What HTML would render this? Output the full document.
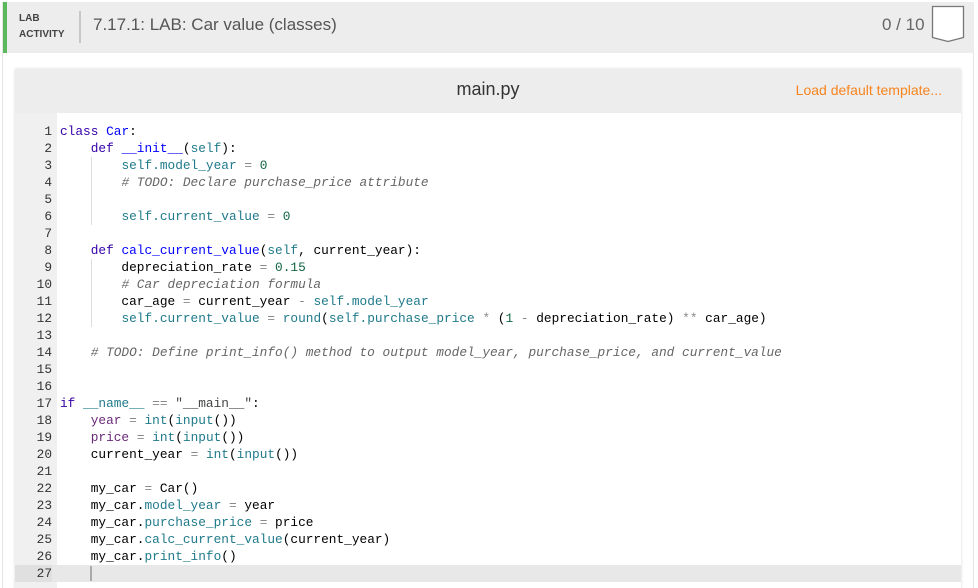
<!DOCTYPE html>
<html><head><style>
html,body{margin:0;width:978px;height:588px;overflow:hidden}
body{background:#fff;font-family:"Liberation Sans",sans-serif;position:relative}
.outer{position:absolute;left:2px;top:2px;width:970px;height:590px;border:1px solid #e4e4e4;border-top:none}
.hdr{position:absolute;left:3px;top:2px;width:971px;height:51px;background:#ededed}
.gb{position:absolute;left:3px;top:2px;width:4px;height:51px;background:#5cb85c}
.lab{position:absolute;left:19px;top:11px;font-size:10px;font-weight:bold;color:#444;line-height:16px}
.sep{position:absolute;left:79px;top:11px;width:2px;height:32px;background:#c8c8c8}
.title{position:absolute;left:93px;top:15px;font-size:17px;color:#555}
.score{position:absolute;left:882px;top:15px;font-size:17px;color:#666}
.card{position:absolute;left:15px;top:69px;width:946px;height:530px;background:#fff;box-shadow:0 0 3px rgba(0,0,0,.15)}
.ch{position:absolute;left:0;top:0;width:946px;height:44px;background:#ededed}
.fn{position:absolute;left:0;width:946px;top:10px;text-align:center;font-size:18px;color:#333}
.ld{position:absolute;right:19px;top:13px;font-size:14px;color:#f7841e}
.gut{position:absolute;left:0;top:44px;width:42px;height:486px;background:#f0f0f0}
.code{position:absolute;left:0;top:54px;font-family:"Liberation Mono",monospace;font-size:12.8px;line-height:17px}
.l{height:17px;white-space:pre;position:relative}
.n{display:inline-block;width:37px;text-align:right;color:#333;margin-right:8px}
.k{color:#3300aa}.f{color:#0000ff}.t{color:#1f7a8a}.s{color:#444}.num{color:#164}.c{color:#666;font-style:italic}.o{color:#888}.v{color:#6a2a7a}
.act{background:#e8e8e8;width:946px}
.g{position:absolute;top:0;width:1px;height:17px;background:#ddd}
</style></head><body>
<div class="outer"></div>
<div class="hdr"></div><div class="gb"></div>
<div class="lab">LAB<br>ACTIVITY</div><div class="sep"></div>
<div class="title">7.17.1: LAB: Car value (classes)</div>
<div class="score">0 / 10</div>
<svg style="position:absolute;left:931px;top:5px" width="34" height="38"><path d="M1.5 1.5H32.5V32.5L17 36.5L1.5 32.5Z" fill="#fff" stroke="#777" stroke-width="1.3"/></svg>
<div class="card">
<div class="ch"><div class="fn">main.py</div><div class="ld">Load default template...</div></div>
<div class="gut"></div>
<div class="code">
<div class="l"><span class="n">1</span><span class="k">class</span> <span class="f">Car</span>:</div>
<div class="l"><span class="n">2</span>    <span class="k">def</span> <span class="f">__init__</span>(<span class="t">self</span>):</div>
<div class="l"><span class="g" style="left:76px"></span><span class="n">3</span>        <span class="t">self.model_year</span> <span class="o">=</span> <span class="num">0</span></div>
<div class="l"><span class="g" style="left:76px"></span><span class="n">4</span>        <span class="c"># TODO: Declare purchase_price attribute</span></div>
<div class="l"><span class="g" style="left:76px"></span><span class="n">5</span></div>
<div class="l"><span class="g" style="left:76px"></span><span class="n">6</span>        <span class="t">self.current_value</span> <span class="o">=</span> <span class="num">0</span></div>
<div class="l"><span class="n">7</span></div>
<div class="l"><span class="n">8</span>    <span class="k">def</span> <span class="f">calc_current_value</span>(<span class="t">self</span>, current_year):</div>
<div class="l"><span class="g" style="left:76px"></span><span class="n">9</span>        depreciation_rate <span class="o">=</span> <span class="num">0.15</span></div>
<div class="l"><span class="g" style="left:76px"></span><span class="n">10</span>        <span class="c"># Car depreciation formula</span></div>
<div class="l"><span class="g" style="left:76px"></span><span class="n">11</span>        car_age <span class="o">=</span> current_year <span class="o">-</span> <span class="t">self.model_year</span></div>
<div class="l"><span class="g" style="left:76px"></span><span class="n">12</span>        <span class="t">self.current_value</span> <span class="o">=</span> <span class="t">round</span>(<span class="t">self.purchase_price</span> <span class="o">*</span> (<span class="num">1</span> <span class="o">-</span> depreciation_rate) <span class="o">**</span> car_age)</div>
<div class="l"><span class="n">13</span></div>
<div class="l"><span class="n">14</span>    <span class="c"># TODO: Define print_info() method to output model_year, purchase_price, and current_value</span></div>
<div class="l"><span class="n">15</span></div>
<div class="l"><span class="n">16</span></div>
<div class="l"><span class="n">17</span><span class="k">if</span> <span class="t">__name__</span> <span class="o">==</span> <span class="s">"__main__"</span>:</div>
<div class="l"><span class="n">18</span>    <span class="v">year</span> <span class="o">=</span> <span class="t">int</span>(<span class="t">input</span>())</div>
<div class="l"><span class="n">19</span>    <span class="v">price</span> <span class="o">=</span> <span class="t">int</span>(<span class="t">input</span>())</div>
<div class="l"><span class="n">20</span>    current_year <span class="o">=</span> <span class="t">int</span>(<span class="t">input</span>())</div>
<div class="l"><span class="n">21</span></div>
<div class="l"><span class="n">22</span>    my_car <span class="o">=</span> Car()</div>
<div class="l"><span class="n">23</span>    my_car.<span class="t">model_year</span> <span class="o">=</span> year</div>
<div class="l"><span class="n">24</span>    my_car.<span class="t">purchase_price</span> <span class="o">=</span> price</div>
<div class="l"><span class="n">25</span>    my_car.<span class="t">calc_current_value</span>(current_year)</div>
<div class="l"><span class="n">26</span>    my_car.<span class="t">print_info</span>()</div>
<div class="l act"><span class="n" style="background:#e0e0e0">27</span><span style="display:inline-block;width:2px;height:15px;background:#aaa;vertical-align:middle;margin-left:30px"></span></div>
</div>
</div>
</body></html>
